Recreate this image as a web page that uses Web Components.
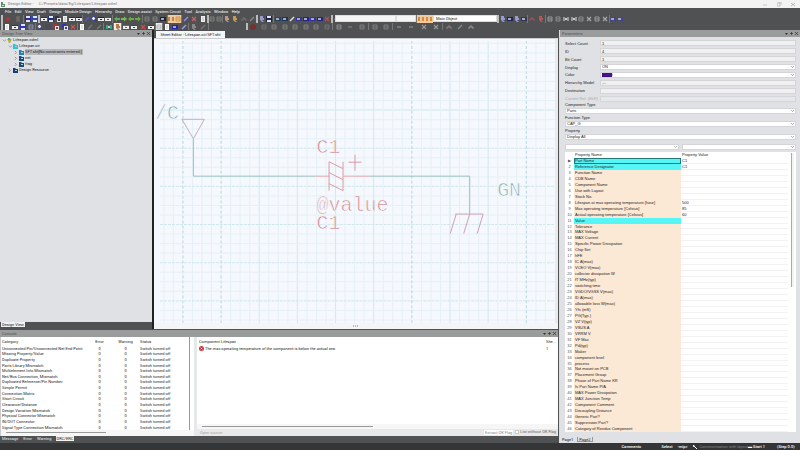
<!DOCTYPE html>
<html lang="en">
<head>
<meta charset="utf-8">
<title>Design Editor</title>
<style>
  html, body { margin: 0; height: 100%; }
  body { font: 4px/6px Roboto, "Noto Sans", sans-serif; color: #222; background: #505152; }
</style>
</head>
<body>
<eda-app></eda-app>
<script>
const RESET = `
  *, *::before { box-sizing: border-box; }
  button, input, select { font: inherit; color: inherit; margin: 0; padding: 0; border: 0; border-radius: 0; background: none; min-width: 0; }
  a { color: inherit; text-decoration: none; }
  svg { display: block; }
`;
function define(name, css, render) {
  customElements.define(name, class extends HTMLElement {
    constructor() {
      super();
      this.attachShadow({ mode: 'open' });
    }
    connectedCallback() {
      this.shadowRoot.innerHTML = `<style>${RESET}${css}</style>${render(this)}`;
    }
  });
}

/* ---------- small toolbar glyphs on a 6x6 box ---------- */
const GLYPHS = {
  doc: c => `<path fill="${c}" d="M1 0h4v6H1z"/><path stroke="#888" stroke-width=".5" d="M2 2h2M2 4h2"/>`,
  save: c => `<path fill="${c}" d="M0 0h6v6H0z"/><path fill="#dfe6ff" d="M1 0h4v2H1zM1 4h4v2H1z"/>`,
  chip: c => `<path fill="${c}" d="M0 1h6v4H0z"/><path fill="#a8a8c4" d="M1 2h3v2H1z"/>`,
  win: c => `<path fill="#eee" d="M0 1h6v4H0z"/><path fill="${c}" d="M0 1h6v1H0zM2 3h2v1H2z"/>`,
  copy: c => `<path fill="${c}" d="M0 0h4v4H0z"/><path fill="#e4e4ee" d="M2 2h4v4H2z"/><path fill="${c}" d="M3 3h2v2H3z"/>`,
  find: c => `<circle cx="2.5" cy="2.5" r="2" fill="#e4ecff" stroke="${c}"/><path stroke="${c}" stroke-width="1.2" d="m4 4 2 2"/>`,
  pen: c => `<path stroke="${c}" stroke-width="1.5" d="m1 5 4-4"/>`,
  left: c => `<path fill="${c}" d="m0 3 3-2.5V2h3v2H3v1.500z"/>`,
  right: c => `<path fill="${c}" d="M6 3 3 .5V2H0v2h3v1.500z"/>`,
  x: c => `<path stroke="${c}" stroke-width="1.1" d="m1 1 4 4m0-4L1 5"/>`,
  wave: c => `<path fill="none" stroke="${c}" d="M0 4h2V2h2v2h2"/>`,
  box: c => `<path fill="none" stroke="${c}" stroke-width=".8" d="M1 1h4v4H1zM1 3h4"/>`,
  two: c => `<path fill="${c}" d="M0 1h2v4H0zM4 1h2v4H4z"/><path fill="#ccc" d="M2 2h2v2H2z"/>`,
  dash: c => `<path stroke="${c}" d="M1 3h4"/>`,
  run: c => `<path fill="${c}" d="M1 0h3v2h1v2H3l2 2H3L1 4z"/>`
};
define('tool-icon', `
  :host { display: block; flex: none; }
  button { display: block; width: 6px; height: 6px; }
  svg { width: 6px; height: 6px; }
`, el => {
  const k = el.getAttribute('kind'), c = el.getAttribute('tint');
  return `<button type="button" aria-label="${k}"><svg viewBox="0 0 6 6">${GLYPHS[k](c)}</svg></button>`;
});

define('tool-group', `
  :host { display: flex; flex: none; align-items: center; justify-content: space-around; height: 8px; border-left: 1px solid #777; }
  :host([grip]) { border-left: 2px solid #bbb; }
  :host([hot]) { background: #f2c99a; }
  :host([pale]) { background: #ececec; }
`, el => `<style>:host{width:${el.getAttribute('span')}px}</style>` +
  el.getAttribute('icons').trim().split(/\s+/).map(s => {
    const [k, c] = s.split(':');
    return `<tool-icon kind="${k}" tint="${c}"></tool-icon>`;
  }).join(''));

define('tool-combo', `
  :host { display: block; flex: none; height: 7px; }
  select { appearance: none; display: block; width: 100%; height: 7px; padding: 0 2px; background: #f5f5f5; color: #222; border: 1px solid #ddd; line-height: 5px; }
  :host([main]) select { background: #fff; }
`, el => `<style>:host{width:${el.getAttribute('span')}px}</style>
  <select aria-label="${el.getAttribute('label')}"><option>${el.getAttribute('value') || ''}</option></select>`);

define('title-bar', `
  :host { display: flex; align-items: center; gap: 3px; height: 8px; padding: 0 4px 0 1px; background: #f3f3f3; color: #777; }
  .mark { width: 4px; height: 5px; }
  .path { flex: 1; padding-left: 2px; }
  .win { display: flex; gap: 9px; }
  .win svg { width: 5px; height: 5px; }
`, () => `
  <svg class="mark" viewBox="0 0 4 5"><path fill="#5b8d6c" d="M0 0h2v2h2v3H0z"/><path fill="#cfe3d5" d="M1 3h2v1H1z"/></svg>
  <span>Design Editor -</span><span class="path">C:/Presets/data/Eg/Lifespan/Lifespan.cdml</span>
  <div class="win">
    <button aria-label="Minimize"><svg viewBox="0 0 5 5"><path stroke="#aaa" stroke-width=".6" d="M0 3h4"/></svg></button>
    <button aria-label="Maximize"><svg viewBox="0 0 5 5"><path fill="none" stroke="#aaa" stroke-width=".6" d="M0 1h3v3H0zM1 0h3v3"/></svg></button>
    <button aria-label="Close"><svg viewBox="0 0 5 5"><path stroke="#999" stroke-width=".6" d="m0 1 4 3m0-3L0 4"/></svg></button>
  </div>`);

define('menu-bar', `
  :host { display: block; height: 7px; background: #505152; color: #fff; }
  nav { display: flex; justify-content: space-between; width: 240px; padding-left: 5px; line-height: 7px; white-space: nowrap; }
`, () => `<nav>${['File','Edit','View','Draft','Design','Module Design','Hierarchy','Draw','Design assist','System Circuit','Tool','Analysis','Window','Help'].map(t => `<a href="#">${t}</a>`).join('')}</nav>`);

define('tool-bars', `
  :host { display: block; background: #505152; padding-bottom: 1px; height: 15px; }
  .row { display: flex; align-items: center; height: 7px; padding-left: 1px; }
  .row + .row { padding-top: 1px; height: 8px; }
`, () => `
  <div class="row">
    <tool-group grip span="22" icons="x:#b33 doc:#686058"></tool-group>
    <tool-group span="15" icons="save:#2c2c8c save:#3448a8"></tool-group>
    <tool-group grip span="44" icons="win:#333 save:#22306e copy:#334 doc:#eee win:#334 win:#223"></tool-group>
    <tool-group span="30" icons="pen:#55d find:#339 win:#224 win:#363"></tool-group>
    <tool-group span="30" icons="left:#6a5 right:#7b5 left:#6a4 right:#6a4"></tool-group>
    <tool-group span="25" icons="box:#888 box:#888 chip:#223"></tool-group>
    <tool-group hot span="14" icons="two:#b84 box:#c84"></tool-group>
    <tool-group span="26" icons="pen:#88f x:#c66 doc:#eee"></tool-group>
    <tool-group grip span="15" icons="box:#888 box:#888"></tool-group>
    <tool-group span="34" icons="run:#b98 run:#c95 wave:#777 pen:#888"></tool-group>
    <tool-group grip span="17" icons="run:#99c save:#224"></tool-group>
    <tool-group span="58" icons="chip:#246 chip:#235 pen:#ddd chip:#339 chip:#228 chip:#339 chip:#228 x:#a55"></tool-group>
    <tool-group grip span="4" icons="dash:#888"></tool-group>
    <tool-combo span="61" label="Layer"></tool-combo>
    <tool-combo span="20" label="Width"></tool-combo>
    <tool-group hot span="17" icons="two:#d83 two:#d83"></tool-group>
    <tool-combo main span="64" label="Object" value="Main Object"></tool-combo>
    <tool-group grip span="30" icons="run:#99d chip:#225 run:#99c chip:#335"></tool-group>
    <tool-group span="18" icons="wave:#a55 run:#b55"></tool-group>
    <tool-group span="64" icons="box:#aaa box:#999 two:#999 two:#999 box:#999 x:#aaa box:#aaa x:#aaa"></tool-group>
    <tool-group span="14" icons="chip:#448 chip:#448"></tool-group>
  </div>
  <div class="row">
    <tool-group grip span="34" icons="doc:#fff win:#334 save:#33b box:#99c"></tool-group>
    <tool-group span="42" icons="find:#447 box:#446 copy:#a33 copy:#33a x:#c55"></tool-group>
    <tool-group span="26" icons="doc:#fff pen:#777 pen:#777"></tool-group>
    <tool-group span="10" icons="two:#3a8"></tool-group>
    <tool-group pale span="8" icons="run:#b74"></tool-group>
    <tool-group span="34" icons="win:#55c win:#33a x:#d44 win:#338"></tool-group>
    <tool-group pale span="7" icons="box:#aaa"></tool-group>
    <tool-group span="26" icons="doc:#fff chip:#22a pen:#99f"></tool-group>
    <tool-group span="20" icons="run:#888 pen:#777"></tool-group>
    <tool-group span="38" icons="dash:#505152"></tool-group>
    <tool-group grip span="86" icons="box:#911 box:#777 box:#888 box:#888 box:#888 box:#888 box:#888 box:#777"></tool-group>
    <tool-group span="36" icons="box:#999 dash:#888 box:#888"></tool-group>
    <tool-group span="24" icons="box:#888 box:#888"></tool-group>
    <tool-group span="50" icons="dash:#999 dash:#999 x:#999 x:#999"></tool-group>
    <tool-group span="34" icons="wave:#888 pen:#888 wave:#999"></tool-group>
  </div>`);

/* ---------- dock frame: grey caption, content slot, tab slot ---------- */
define('dock-panel', `
  :host { display: flex; flex-direction: column; min-width: 0; min-height: 0; }
  header { display: flex; align-items: center; justify-content: space-between; flex: none; height: 7px; padding: 0 2px; background: #9a9c9c; color: #555; }
  .ctl { display: flex; gap: 2px; }
  .ctl svg { width: 3px; height: 3px; }
  .body { flex: 1; display: flex; min-height: 0; background: #dfe1e5; }
  .body ::slotted(*) { flex: 1; }
`, el => `
  <header><span>${el.getAttribute('caption')}</span><span class="ctl">
    <button aria-label="Menu"><svg viewBox="0 0 3 3"><path fill="#333" d="M0 1h3L1.500 3z"/></svg></button>
    <button aria-label="Pin"><svg viewBox="0 0 3 3"><path stroke="#333" stroke-width=".7" d="M1.500 0v3M0 1.500h3"/></svg></button>
    <button aria-label="Close"><svg viewBox="0 0 3 3"><path stroke="#333" stroke-width=".7" d="m0 0 3 3m0-3L0 3"/></svg></button>
  </span></header>
  <div class="body"><slot></slot></div><slot name="tabs"></slot>`);

define('tab-strip', `
  :host { display: flex; align-items: flex-start; flex: none; gap: 3px; height: 7px; padding-left: 1px; background: #505152; color: #eee; }
  :host([light]) { background: #dfe1e5; color: #222; align-items: center; height: 8px; }
  button { padding: 0 1px; line-height: 5px; height: 5px; white-space: nowrap; }
  button.on { background: #f2f2f2; color: #222; }
  :host([light]) button { background: none; }
  :host([light]) button:not(.on) { border: 1px solid #999; border-top: 0; }
`, el => el.getAttribute('tabs').split(',').map(t => t.startsWith('*') ? `<button class="on">${t.slice(1)}</button>` : `<button>${t}</button>`).join(''));

define('project-tree', `
  :host { display: block; padding: 0 2px; }
  ul { list-style: none; margin: 0; padding: 0; }
  ul ul { padding-left: 6px; }
  .node { display: flex; align-items: center; gap: 1px; height: 6px; white-space: nowrap; }
  .node svg { width: 5px; height: 5px; flex: none; }
  .node .tw { width: 4px; height: 4px; }
  .sel { background: #b8b9bc; padding-right: 1px; }
`, () => {
  const tw = o => `<svg class="tw" viewBox="0 0 5 5"><path fill="none" stroke="#777" stroke-width=".8" d="${o ? 'm1 2 2 2 2-2' : 'm1 1 2 2-2 2'}"/></svg>`;
  const f = c => `<svg viewBox="0 0 5 5"><path fill="${c}" d="M0 0h2l1 1h2v4H0z"/><path fill="#9fd4ea" d="M2 2h2v1H2z"/></svg>`;
  const n = (o, i, t, s = '') => `<div class="node">${tw(o)}${i}<span class="${s}">${t}</span></div>`;
  return `<ul><li>${n(1, `<svg viewBox="0 0 5 5"><path fill="#b8b040" d="M0 1h5L3 5H2z"/><path fill="#5a8" d="M1 0h2v2H1z"/></svg>`, 'Lifespan.cdml')}
    <ul><li>${n(1, f('#2ac4d8'), 'Lifespan.cir')}
      <ul><li>${n(0, f('#2a7fb0'), 'SFT.sht[No constraints entered.]', 'sel')}</li><li>${n(0, f('#1c4a78'), 'net')}</li><li>${n(0, f('#1c4a78'), 'frag')}</li></ul></li>
    <li>${n(0, f('#223a70'), 'Design Resource')}</li></ul></li></ul>`;
});

/* ---------- drawing sheet ---------- */
define('schematic-sheet', `
  :host { display: flex; flex-direction: column; min-width: 0; min-height: 0; background: #505152; }
  .tabs { display: flex; height: 8px; padding: 1px 0 0 2px; flex: none; }
  .tabs button { display: flex; align-items: center; justify-content: space-between; gap: 2px; width: 69px; height: 7px; padding: 0 2px; background: #f4f6f8; color: #111; white-space: nowrap; }
  .tabs svg { width: 3px; height: 4px; }
  .view { flex: 1; min-height: 0; display: flex; background: #f5f8fc; border-top: 1px solid #ccc; border-right: 3px solid #e8eaec; }
  .view svg { width: 100%; height: 100%; }
  .foot { display: flex; align-items: center; justify-content: center; flex: none; height: 6px; background: #f3f5f6; color: #777; }
  /* a background-coloured outline thins the strokes of the plotter-style lettering */
  text { font-family: "Liberation Mono", monospace; font-size: 20px; stroke: #f5f8fc; stroke-width: .7; }
`, () => {
  let g = '';
  for (let i = -3; i < 42; i++) {
    const big = i % 4 === 0, p = i / 4 * 38.250;
    const dashed = [0, 4, 24, 36].includes(i);
    const v = 29 + p, h = 33 + p;
    if (v > 5 && v < 400) g += `<path d="M${v} 2V286" stroke="${dashed ? '#b2d7de' : big ? '#d3e8ee' : '#e6f0f7'}" ${dashed ? 'stroke-dasharray="3 2"' : ''}/>`;
    if (h > 2 && h < 286) g += `<path d="M6 ${h + 38.250}H402" stroke="${big ? '#cfe7ec' : '#e6f0f7'}" ${big && i > 0 ? 'stroke-dasharray="3 1"' : ''}/>`;
  }
  for (const h of [4.300, 13.900, 23.400, 33, 42.600, 52, 61.700]) g += `<path d="M6 ${h}H402" stroke="#e6f0f7"/>`;
  return `<div class="tabs"><button><svg viewBox="0 0 3 4"><path fill="#8ab" d="M0 0h3v4H0z"/></svg><span>Sheet Editor - Lifespan.cir/SFT.sht</span><svg viewBox="0 0 3 4"><path stroke="#555" stroke-width=".6" d="m0 0 3 4m0-4L0 4"/></svg></button></div>
  <div class="view"><svg viewBox="0 0 402 286" preserveAspectRatio="xMinYMin slice" fill="none">
    ${g}
    <text x="1" y="80" fill="#7da6ac">/C</text>
    <path stroke="#c3b0bf" d="M28 80.500h22.500L39.500 100z"/>
    <path stroke="#98c2be" d="M39.500 100v37.500H162M216 137.500h100.500V176"/>
    <path stroke="#e0a8ae" d="M162 137.500h14M190 137.500h26"/>
    <path stroke="#dc9aa2" d="M175.500 123v29M189.500 123v29M175.500 123l14 7M175.500 134l14 7M175.500 145l14 7M195 123.500h13M201.500 116v16"/>
    <path stroke="#cfa0b4" d="M302 175.500h28M303 175.500l-6 19.500M316.500 175.500l-6 19.500M330 175.500l-6 19.500"/>
    <g fill="#cb7f8a"><text x="163" y="114">C1</text><text x="163" y="172">@value<tspan x="163" y="190">C1</tspan></text></g>
    <text x="344" y="157" fill="#7fada8">GN</text>
  </svg></div>
  <div class="foot"><svg width="6" height="2" viewBox="0 0 6 2"><path stroke="#777" stroke-dasharray="1 1" d="M0 1h6"/></svg></div>`;
});

/* ---------- rule check results ---------- */
const CHECKS = ['Unconnected Pin/Unconnected Net End Point','Missing Property/Value','Duplicate Property','Parts Library Mismatch','Multielement Info Mismatch','Net/Bus Connection, Mismatch','Duplicated Reference/Pin Number','Simple Permit','Connection Matrix','Short Circuit','Clearance/Distance','Design Variation Mismatch','Physical Connector Mismatch','IN/OUT Connector','Signal Type Connection Mismatch'];
define('check-results', `
  :host { display: grid; grid-template-columns: 194fr 3fr 361fr; min-height: 0; background: #e6e8e9; }
  .left, .right { display: flex; flex-direction: column; min-height: 0; min-width: 0; }
  .left { background: #fff; border-left: 1px solid #ccc; }
  table { flex: 1; min-height: 0; display: grid; grid-template-rows: 8px 1fr; margin-right: 4px; border-right: 1px solid #999; }
  thead { display: grid; }
  tbody { display: grid; grid-auto-rows: 1fr; min-height: 0; }
  tr { display: grid; grid-template-columns: 86fr 24fr 28fr 50fr; align-items: center; min-height: 0; }
  th, td { padding: 0 0 0 1px; font-weight: 400; text-align: left; white-space: nowrap; line-height: 5px; }
  .n { text-align: center; }
  .bar { flex: none; height: 6px; display: flex; align-items: center; padding-left: 5px; background: #f6f6f6; }
  .bar::before { content: ""; width: 53%; height: 1px; background: #999; }
  .right .list { flex: 1; background: #fff; padding: 1px 2px 0; }
  .line { display: flex; align-items: center; gap: 1px; height: 7px; }
  .line span:last-child { margin-left: auto; width: 10px; }
  .line svg { width: 5px; height: 5px; }
  .right .bar { height: 5px; }
  .right .bar::before { width: 48%; }
  .foot { flex: none; display: flex; align-items: center; gap: 2px; height: 7px; padding: 0 2px; color: #666; }
  .foot button { background: #fff; color: #888; line-height: 5px; padding: 0 1px; }
  .foot .open { margin-right: auto; color: #aaa; background: none; }
  label { display: flex; align-items: center; gap: 1px; white-space: nowrap; }
  input { appearance: none; width: 4px; height: 4px; background: #fff; border: 1px solid #ccc; }
`, () => `
  <section class="left"><table><thead><tr><th>Category</th><th class="n">Error</th><th class="n">Warning</th><th>Status</th></tr></thead>
    <tbody>${CHECKS.map(c => `<tr><td>${c}</td><td class="n">0</td><td class="n">0</td><td>Switch turned off</td></tr>`).join('')}</tbody></table><div class="bar"></div></section>
  <i></i>
  <section class="right"><div class="list">
    <div class="line"><span>Component Lifespan</span><span>She...</span></div>
    <div class="line"><svg viewBox="0 0 6 6"><circle cx="3" cy="3" r="3" fill="#c8323c"/><path stroke="#fff" d="m2 2 2 2m0-2L2 4"/></svg><span>The max operating temperature of the component is below the actual one.</span><span>1</span></div>
    </div><div class="bar"></div>
    <div class="foot"><button class="open" disabled>Open source</button><button>Extract OK Flag</button><label><input type="checkbox">List without OK Flag</label></div>
  </section>`);

/* ---------- attributes ---------- */
define('attribute-form', `
  :host { display: block; flex: none; font-family: "Liberation Sans", sans-serif; }
  .grid { display: grid; grid-template-columns: 31fr 198fr; gap: 1px 2px; height: 62px; grid-auto-rows: 1fr; align-items: center; }
  label { line-height: 5px; white-space: nowrap; }
  input, select { appearance: none; display: block; width: 100%; height: 6px; padding: 0 1px; border: 1px solid #d4d5d8; font-size: 4px; line-height: 4px; background: #fff; }
  .grid input { background: #f0f0f1; }
  .grid .dim { color: #aaa; background: #e6e7ea; }
  .grid label.dim { background: none; }
  .pick { position: relative; min-width: 0; }
  .pick svg { position: absolute; right: 2px; top: 2px; width: 3px; height: 2px; }
  .sw { padding-left: 2px; color: #5a2a9a; background: linear-gradient(#3c1080, #3c1080) 1px 0 / 10px 4px no-repeat #fff; }
  .full { display: grid; grid-template-rows: 6px 7px; }
  .two { display: grid; grid-template-columns: 1fr 1fr; gap: 3px; padding: 3px 0 2px; }
`, () => {
  let id = 0;
  const arrow = `<svg viewBox="0 0 3 2"><path fill="none" stroke="#888" stroke-width=".6" d="m0 0 1.500 1.500L3 0"/></svg>`;
  const pick = (a, v, c = '') => `<div class="pick"><select ${a} class="${c}"><option>${v}</option></select>${arrow}</div>`;
  const txt = (l, v, c = '') => `<label class="${c}" for="a${++id}">${l}</label><input id="a${id}" class="${c}" value="${v}" readonly>`;
  const sel = (l, v, c) => `<label for="a${++id}">${l}</label>${pick(`id="a${id}"`, v, c)}`;
  return `<div class="grid">${txt('Select Count', '1')}${txt('ID', '4')}${txt('Bit Count', '1')}${sel('Display', 'ON')}${sel('Color', 'Violet', 'sw')}${txt('Hierarchy Model', '---')}${txt('Destination', '')}${txt('Current Ref. (ELF)', '', 'dim')}</div>
    <div class="full">${sel('Component Type', 'Parts')}</div><div class="full">${sel('Function Type', 'CAP_G')}</div><div class="full">${sel('Property', 'Display All')}</div>
    <div class="two">${pick('aria-label="Name filter"', '')}${pick('aria-label="Value filter"', '')}</div>`;
});

const PROPS = ['Part Name','Reference Designator','Function Name','CDB Name','Component Name','Use with Layout','Stock No.','Lifespan at max operating temperature [hour]','Max operating temperature [Celsius]','Actual operating temperature [Celsius]','Value','Tolerance','MAX Voltage','MAX Current','Specific Power Dissipation','Chip Set','hFE','IC A(max)','VCEO V(max)','collector dissipation W','fT MHz(typ)','switching time','VGDO/VGSS V(max)','ID A(max)','allowable loss W(max)','Yfs (mS)','PG(Typ.)','VZ V(typ)','VSUS A','VRRM V','VF Max','Pd(typ)','Maker','component level','process','Not mount on PCB','Placement Group','Phase of Part Name KR','Is Part Name P/A','MAX Power Dissipation','MAX Junction Temp','Component Comment','Decoupling Distance','Generic Part?','Suppression Part?','Category of Reedux Component'];
const VALUES = { 0: 'C1', 1: 'C1', 7: '500', 8: '85', 9: '60' };
define('property-table', `
  :host { display: flex; flex: 1; min-height: 0; background: #fff; font-family: "Liberation Sans", sans-serif; }
  table { flex: 1; display: grid; grid-template-rows: 6px 1fr; min-height: 0; }
  tbody { display: grid; grid-auto-rows: 1fr; min-height: 0; }
  tr { display: grid; grid-template-columns: 9fr 107fr 107fr; min-height: 0; }
  td, th { padding: 0 1px; font-weight: 400; text-align: left; line-height: 6px; white-space: nowrap; min-height: 0; overflow: hidden; }
  td:nth-child(2) { background: #fbe8d5; }
  td:nth-child(3) { border-bottom: 1px solid #f2f2f2; }
  td:first-child { text-align: center; color: #555; }
  .key td:nth-child(2) { background: #57f6f6; }
  .cur td:nth-child(2) { outline: 1px solid #277; outline-offset: -1px; }
  .sb { width: 3px; margin: 1px 2px 0 3px; background: #f3f3f3; border-left: 1px solid #aaa; height: 48%; }
`, () => `<table><thead><tr><th></th><th>Property Name</th><th>Property Value</th></tr></thead><tbody>${PROPS.map((p, i) =>
  `<tr class="${[0, 1, 10].includes(i) ? 'key' : ''} ${i ? '' : 'cur'}"><td>${i ? i + 1 : '▶'}</td><td>${p}</td><td>${VALUES[i] || ''}</td></tr>`).join('')}</tbody></table><div class="sb"></div>`);

define('attribute-pane', `
  :host { display: flex; flex-direction: column; min-height: 0; padding: 3px 4px 3px 5px; }
`, () => `<attribute-form></attribute-form><property-table></property-table>`);

define('status-bar', `
  :host { display: grid; grid-template-columns: 622fr 40fr 16fr 16fr 54fr 29fr 23fr; align-items: center; height: 7px; background: #333537; color: #fff; font-weight: 500; white-space: nowrap; }
  .c { display: flex; align-items: center; gap: 2px; color: #85878a; font-weight: 400; }
`, () => `<span></span><span>Comments</span><span>Select</span><span>-mip&gt;</span><span class="c"><svg width="4" height="4" viewBox="0 0 4 4"><path stroke="#fff" d="m0 0 4 4M0 2l1-2"/></svg>Communication with layout</span><span>▬ Start 1</span><span>(Step 0.0)</span>`);

define('eda-app', `
  :host { display: flex; flex-direction: column; height: 100vh; background: #505152; }
  .main { flex: 1; min-height: 0; display: grid; grid-template-columns: 558fr 241fr; gap: 1px; }
  .work { display: grid; grid-template-rows: 300fr 113fr; gap: 1px; min-height: 0; min-width: 0; }
  .top { display: grid; grid-template-columns: 152fr 404fr; gap: 2px; min-height: 0; background: #222; }
  .main > dock-panel { border-left: 1px solid #ddd; }
`, () => `
  <title-bar></title-bar><menu-bar></menu-bar><tool-bars></tool-bars>
  <div class="main">
    <div class="work">
      <div class="top">
        <dock-panel caption="Design Tree View"><project-tree></project-tree><tab-strip slot="tabs" tabs="*Design View"></tab-strip></dock-panel>
        <schematic-sheet></schematic-sheet>
      </div>
      <dock-panel caption="Console"><check-results></check-results><tab-strip slot="tabs" tabs="Message,Error,Warning,*DRC/ERC"></tab-strip></dock-panel>
    </div>
    <dock-panel caption="Parameters"><attribute-pane></attribute-pane><tab-strip light slot="tabs" tabs="*Page1,Page2"></tab-strip></dock-panel>
  </div>
  <status-bar></status-bar>`);
</script>
</body>
</html>
